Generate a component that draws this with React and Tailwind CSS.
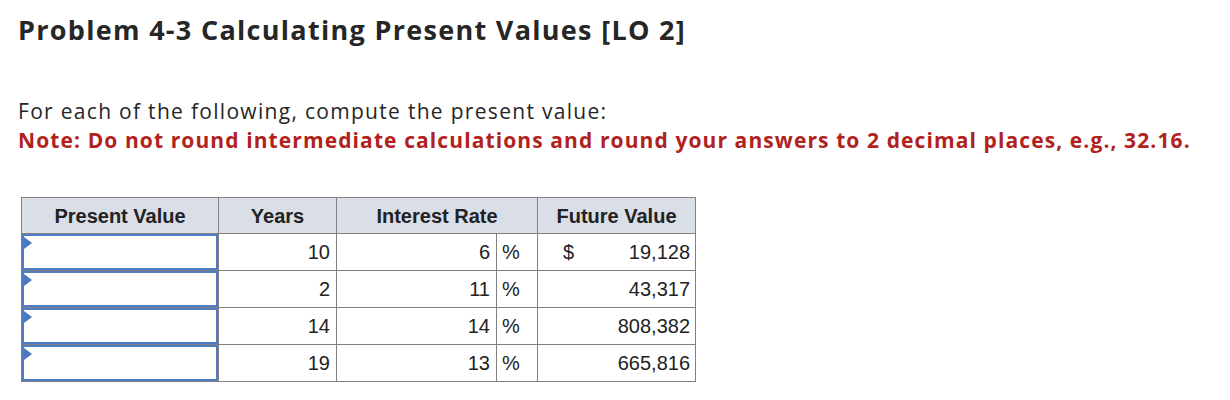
import React from 'react';

const rows = [
  { years: 10, rate: 6, fv: '19,128', dollar: true },
  { years: 2, rate: 11, fv: '43,317' },
  { years: 14, rate: 14, fv: '808,382' },
  { years: 19, rate: 13, fv: '665,816' },
];

const AnswerInput = () => (
  <div className="relative h-full w-full border-2 border-[#4f7cc4] bg-white">
    <span className="absolute left-0 top-[1px] h-0 w-0 border-y-[6px] border-l-[8px] border-y-transparent border-l-[#4a78c2]" />
  </div>
);

export default function App() {
  return (
    <div className="min-h-screen bg-white px-[18px] pt-[12px] text-[#222]">
      <h1 className="font-['Open_Sans',sans-serif] text-[27px] font-bold leading-[36px] tracking-[1.3px] text-[#262626]">
        Problem 4-3 Calculating Present Values [LO 2]
      </h1>

      <div className="mt-[49px] font-['Open_Sans',sans-serif] text-[21px] leading-[29px]">
        <p className="tracking-[1.3px] text-[#262626]">For each of the following, compute the present value:</p>
        <p className="font-bold tracking-[1.1px] text-[#b1221c]">
          Note: Do not round intermediate calculations and round your answers to 2 decimal places, e.g., 32.16.
        </p>
      </div>

      <table className="ml-[3px] mt-[42px] table-fixed border-collapse font-['Liberation_Sans',Arial,sans-serif] text-[20px] text-[#222]">
        <colgroup>
          <col className="w-[197px]" />
          <col className="w-[118px]" />
          <col className="w-[160px]" />
          <col className="w-[41px]" />
          <col className="w-[158px]" />
        </colgroup>
        <thead>
          <tr className="h-[36px] bg-[#d9dee7]">
            <th className="border border-[#808080] font-bold">Present Value</th>
            <th className="border border-[#808080] font-bold">Years</th>
            <th colSpan={2} className="border border-[#808080] font-bold">Interest Rate</th>
            <th className="border border-[#808080] font-bold">Future Value</th>
          </tr>
        </thead>
        <tbody>
          {rows.map((r) => (
            <tr key={r.years} className="h-[37px]">
              <td className="h-[37px] border border-[#808080] p-0">
                <AnswerInput />
              </td>
              <td className="border border-[#808080] pr-[6px] text-right">{r.years}</td>
              <td className="border border-[#808080] pr-[6px] text-right">{r.rate}</td>
              <td className="border border-[#808080] pl-[5px] text-left">%</td>
              <td className="border border-[#808080] pl-[25px] pr-[5px]">
                <div className="flex justify-between">
                  <span>{r.dollar ? '$' : ''}</span>
                  <span>{r.fv}</span>
                </div>
              </td>
            </tr>
          ))}
        </tbody>
      </table>
    </div>
  );
}
